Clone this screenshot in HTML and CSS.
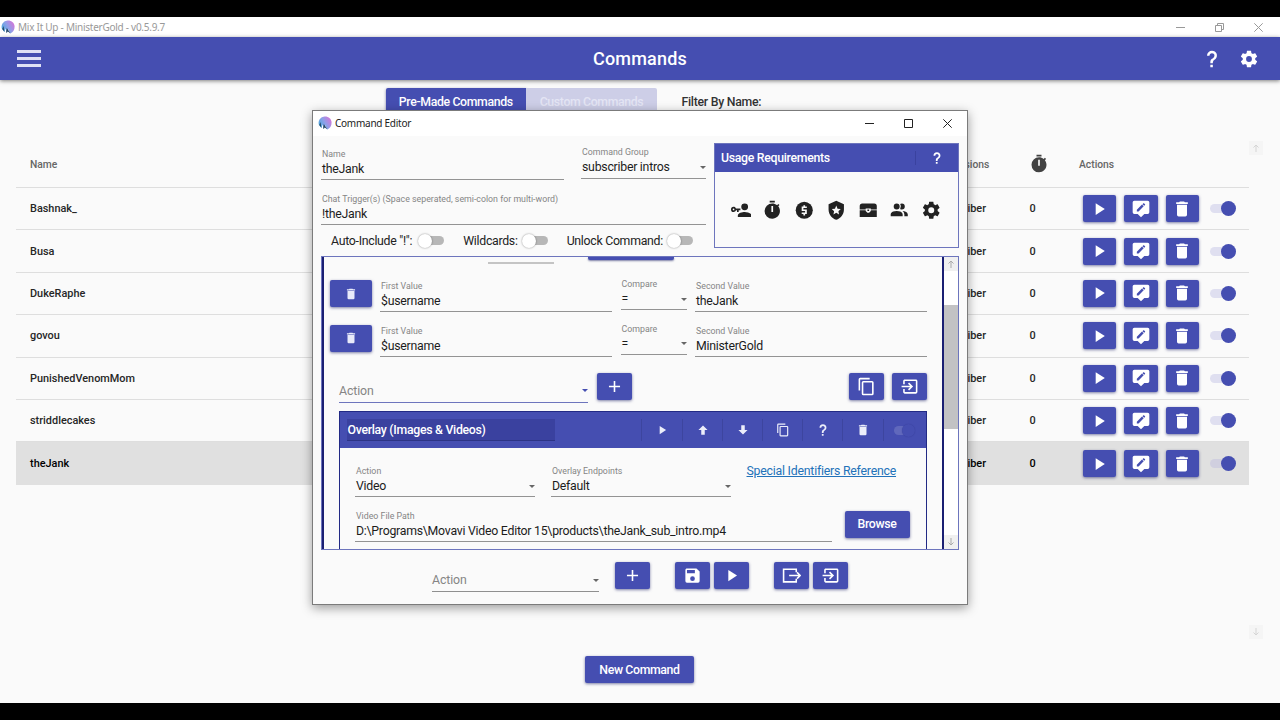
FILE: index.html
```html
<!DOCTYPE html>
<html lang="en">
<head>
<meta charset="utf-8">
<title>Mix It Up</title>
<link rel="stylesheet" href="styles.css">
</head>
<body>
<svg class="sprite" width="0" height="0">
  <linearGradient id="logo-fill" x1="0" y1="0.8" x2="1" y2="0.2"><stop offset="0" stop-color="#3fa9dc"/><stop offset=".5" stop-color="#8f9fe8"/><stop offset="1" stop-color="#d873d8"/></linearGradient>
  <symbol id="logo" viewBox="0 0 14 14"><path fill="url(#logo-fill)" d="M1 9A6 6.300 0 0 1 6.500 .5C10.500 .3 13.600 3 13.600 6.500C13.600 10 12 12.500 9 13.500L7 9L6 13L4.500 8.500L3.500 12Z"/><path fill="#26445f" d="M.5 11L2.500 6L3.400 12L1.500 9ZM5 13L5.800 8L9.500 13.600L6.800 11.500Z"/></symbol>
  <symbol id="help" viewBox="0 0 24 24"><path d="M10,19H13V22H10V19M12,2C17.35,2.22 19.68,7.62 16.5,11.67C15.67,12.67 14.33,13.33 13.67,14.17C13,15 13,16 13,17H10C10,15.33 10,13.92 10.67,12.92C11.33,11.92 12.67,11.33 13.5,10.67C15.92,8.43 15.32,5.26 12,5A3,3 0 0,0 9,8H6A6,6 0 0,1 12,2Z"/></symbol>
  <symbol id="cog" viewBox="0 0 24 24"><path d="M12,15.5A3.5,3.5 0 0,1 8.5,12A3.5,3.5 0 0,1 12,8.500A3.5,3.5 0 0,1 15.5,12A3.5,3.5 0 0,1 12,15.5M19.43,12.97C19.47,12.65 19.5,12.33 19.5,12C19.5,11.67 19.47,11.34 19.43,11L21.54,9.37C21.73,9.22 21.78,8.95 21.66,8.73L19.66,5.27C19.54,5.05 19.27,4.96 19.05,5.05L16.56,6.05C16.04,5.66 15.5,5.32 14.87,5.07L14.5,2.42C14.46,2.18 14.25,2 14,2H10C9.75,2 9.54,2.18 9.5,2.42L9.13,5.07C8.5,5.32 7.96,5.66 7.44,6.05L4.95,5.05C4.73,4.96 4.46,5.05 4.34,5.27L2.34,8.73C2.21,8.95 2.27,9.22 2.46,9.37L4.57,11C4.53,11.34 4.5,11.67 4.5,12C4.5,12.33 4.53,12.65 4.57,12.97L2.46,14.63C2.27,14.78 2.21,15.05 2.34,15.27L4.34,18.73C4.46,18.95 4.73,19.03 4.95,18.95L7.44,17.94C7.96,18.34 8.5,18.68 9.13,18.93L9.5,21.58C9.54,21.82 9.75,22 10,22H14C14.25,22 14.46,21.82 14.5,21.58L14.87,18.93C15.5,18.67 16.04,18.34 16.56,17.94L19.05,18.95C19.27,19.03 19.54,18.95 19.66,18.73L21.66,15.27C21.78,15.05 21.73,14.78 21.54,14.63L19.43,12.97Z"/></symbol>
  <symbol id="timer" viewBox="0 0 24 24"><path fill-rule="evenodd" d="M19.03,7.39L20.45,5.97C20,5.46 19.55,5 19.04,4.56L17.62,6C16.07,4.74 14.12,4 12,4A9,9 0 0,0 3,13A9,9 0 0,0 12,22C17,22 21,17.97 21,13C21,10.88 20.26,8.93 19.03,7.39ZM11,14V7H13V14ZM15,1H9V3H15Z"/></symbol>
  <symbol id="play" viewBox="0 0 24 24"><path d="M8,5.14V19.14L19,12.14L8,5.14Z"/></symbol>
  <symbol id="edit" viewBox="0 0 24 24"><path fill-rule="evenodd" d="M20,2H4A2,2 0 0,0 2,4V16A2,2 0 0,0 4,18H8L12,22L16,18H20A2,2 0 0,0 22,16V4A2,2 0 0,0 20,2ZM9.08,15H7V12.91L13.17,6.72L15.24,8.8ZM16.84,7.2L15.83,8.21L13.76,6.18L14.77,5.16C14.97,4.95 15.31,4.94 15.55,5.16L16.84,6.41C17.05,6.62 17.06,6.96 16.84,7.2Z"/></symbol>
  <symbol id="trash" viewBox="0 0 24 24"><path d="M19,4H15.5L14.5,3H9.5L8.5,4H5V6H19M6,19A2,2 0 0,0 8,21H16A2,2 0 0,0 18,19V7H6V19Z"/></symbol>
  <symbol id="copy" viewBox="0 0 24 24"><path d="M19,21H8V7H19M19,5H8A2,2 0 0,0 6,7V21A2,2 0 0,0 8,23H19A2,2 0 0,0 21,21V7A2,2 0 0,0 19,5M16,1H4A2,2 0 0,0 2,3V17H4V3H16V1Z"/></symbol>
  <symbol id="save" viewBox="0 0 24 24"><path d="M15,9H5V5H15M12,19A3,3 0 0,1 9,16A3,3 0 0,1 12,13A3,3 0 0,1 15,16A3,3 0 0,1 12,19M17,3H5C3.89,3 3,3.9 3,5V19A2,2 0 0,0 5,21H19A2,2 0 0,0 21,19V7L17,3Z"/></symbol>
  <symbol id="import" viewBox="0 0 24 24"><path d="M10.09 15.59L11.5 17l5-5-5-5-1.410 1.410L12.670 11H2v2h10.670zM20 3H6c-1.110 0-2 .9-2 2v4h2V5h14v14H6v-4H4v4c0 1.100.89 2 2 2h14c1.100 0 2-.9 2-2V5c0-1.100-.9-2-2-2z"/></symbol>
  <symbol id="export" viewBox="0 0 24 24"><path fill="none" stroke="currentColor" stroke-width="2" d="M18 8V4H2V20H18V16M9 12H23M19 8L23 12L19 16"/></symbol>
  <symbol id="up" viewBox="0 0 24 24"><path d="M15,20H9V12H4.16L12,4.16L19.84,12H15V20Z"/></symbol>
  <symbol id="down" viewBox="0 0 24 24"><path d="M9,4H15V12H19.84L12,19.84L4.16,12H9V4Z"/></symbol>
  <symbol id="plus" viewBox="0 0 24 24"><path d="M19,13H13V19H11V13H5V11H11V5H13V11H19V13Z"/></symbol>
  <symbol id="key" viewBox="0 0 24 24"><path d="M11,10V12H9V14H7V12H5.8C5.4,13.2 4.3,14 3,14A3,3 0 0,1 0,11A3,3 0 0,1 3,8C4.3,8 5.4,8.8 5.8,10H11M3,10A1,1 0 0,0 2,11A1,1 0 0,0 3,12A1,1 0 0,0 4,11A1,1 0 0,0 3,10M16,14C18.7,14 24,15.3 24,18V20H8V18C8,15.3 13.3,14 16,14M16,12A4,4 0 0,1 12,8A4,4 0 0,1 16,4A4,4 0 0,1 20,8A4,4 0 0,1 16,12Z"/></symbol>
  <symbol id="coin" viewBox="0 0 24 24"><circle cx="12" cy="12" r="10"/><path fill="none" stroke="#fafafa" stroke-width="2" d="M15 8.500H10V12H14V15.500H9M12 6V8M12 16V18"/></symbol>
  <symbol id="shield" viewBox="0 0 24 24"><path fill-rule="evenodd" d="M12,1L3,5V11C3,16.55 6.84,21.74 12,23C17.16,21.74 21,16.55 21,11V5ZM12,6.5L13.500,10.100L17.300,10.500L14.500,13.100L15.300,17L12,15L8.700,17L9.500,13.100L6.700,10.500L10.500,10.100Z"/></symbol>
  <symbol id="chest" viewBox="0 0 24 24"><path d="M5,4H19A3,3 0 0,1 22,7V11H15V10H9V11H2V7A3,3 0 0,1 5,4M11,11H13V13H11V11M2,12H9V13L11,15H13L15,13V12H22V20H2V12Z"/></symbol>
  <symbol id="users" viewBox="0 0 24 24"><path d="M16 17V19H2V17S2 13 9 13 16 17 16 17M12.5 7.5A3.5 3.5 0 1 0 9 11A3.5 3.5 0 0 0 12.5 7.5M15.94 13A5.32 5.32 0 0 1 18 17V19H22V17S22 13.37 15.94 13M15 4A3.39 3.39 0 0 0 13.07 4.59A5 5 0 0 1 13.07 10.41A3.39 3.39 0 0 0 15 11A3.5 3.5 0 0 0 15 4Z"/></symbol>
  <symbol id="min" viewBox="0 0 9 9"><path class="thin" d="M0 4.500H9"/></symbol>
  <symbol id="max" viewBox="0 0 9 9"><path class="thin" d="M.5 .5H8.500V8.500H.5Z"/></symbol>
  <symbol id="restore" viewBox="0 0 9 9"><path class="thin" d="M.5 2.500H6.500V8.500H.5ZM2.500 2.500V.5H8.500V6.500H6.500"/></symbol>
  <symbol id="close" viewBox="0 0 9 9"><path class="thin" d="M.3 .3L8.700 8.700M8.700 .3L.3 8.700"/></symbol>
  <symbol id="arrow" viewBox="0 0 8 8"><path class="thin" d="M4 8V1M1.500 3.500L4 1L6.500 3.500"/></symbol>
</svg>

<main class="window">
  <div class="titlebar">
    <svg class="logo"><use href="#logo"/></svg><span class="app-name">Mix It Up - MinisterGold - v0.5.9.7</span>
    <div class="controls"><svg><use href="#min"/></svg><svg><use href="#restore"/></svg><svg><use href="#close"/></svg></div>
  </div>
  <header class="appbar">
    <div class="menu"><i></i><i></i><i></i></div>
    <h1>Commands</h1>
    <div class="appbar-tools"><svg><use href="#help"/></svg><svg><use href="#cog"/></svg></div>
  </header>
  <div class="tabs"><button class="btn tab">Pre-Made Commands</button><button class="btn tab tab-off">Custom Commands</button><span class="filter">Filter By Name:</span></div>
  <section class="list">
    <div class="table">
      <div class="row head"><span>Name</span><span>Permissions</span><svg class="timer"><use href="#timer"/></svg><span>Actions</span></div>
      <div class="row"><b>Bashnak_</b><b>Subscriber</b><b>0</b><div class="actions"><button class="btn"><svg><use href="#play"/></svg></button><button class="btn"><svg><use href="#edit"/></svg></button><button class="btn"><svg><use href="#trash"/></svg></button><span class="switch on"></span></div></div>
      <div class="row"><b>Busa</b><b>Subscriber</b><b>0</b><div class="actions"><button class="btn"><svg><use href="#play"/></svg></button><button class="btn"><svg><use href="#edit"/></svg></button><button class="btn"><svg><use href="#trash"/></svg></button><span class="switch on"></span></div></div>
      <div class="row"><b>DukeRaphe</b><b>Subscriber</b><b>0</b><div class="actions"><button class="btn"><svg><use href="#play"/></svg></button><button class="btn"><svg><use href="#edit"/></svg></button><button class="btn"><svg><use href="#trash"/></svg></button><span class="switch on"></span></div></div>
      <div class="row"><b>govou</b><b>Subscriber</b><b>0</b><div class="actions"><button class="btn"><svg><use href="#play"/></svg></button><button class="btn"><svg><use href="#edit"/></svg></button><button class="btn"><svg><use href="#trash"/></svg></button><span class="switch on"></span></div></div>
      <div class="row"><b>PunishedVenomMom</b><b>Subscriber</b><b>0</b><div class="actions"><button class="btn"><svg><use href="#play"/></svg></button><button class="btn"><svg><use href="#edit"/></svg></button><button class="btn"><svg><use href="#trash"/></svg></button><span class="switch on"></span></div></div>
      <div class="row"><b>striddlecakes</b><b>Subscriber</b><b>0</b><div class="actions"><button class="btn"><svg><use href="#play"/></svg></button><button class="btn"><svg><use href="#edit"/></svg></button><button class="btn"><svg><use href="#trash"/></svg></button><span class="switch on"></span></div></div>
      <div class="row selected"><b>theJank</b><b>Subscriber</b><b>0</b><div class="actions"><button class="btn"><svg><use href="#play"/></svg></button><button class="btn"><svg><use href="#edit"/></svg></button><button class="btn"><svg><use href="#trash"/></svg></button><span class="switch on"></span></div></div>
    </div>
    <div class="rail faint"><span class="arrow"><svg><use href="#arrow"/></svg></span><span class="arrow flip"><svg><use href="#arrow"/></svg></span></div>
  </section>
  <footer class="footer"><button class="btn new">New Command</button></footer>
</main>

<div class="dialog">
  <div class="titlebar dialog-title">
    <svg class="logo"><use href="#logo"/></svg><span>Command Editor</span>
    <div class="controls"><svg><use href="#min"/></svg><svg><use href="#max"/></svg><svg><use href="#close"/></svg></div>
  </div>
  <div class="top">
    <div class="details">
      <div class="pair">
        <div class="field name-field"><label>Name</label><div class="value">theJank</div></div>
        <div class="field select group-field"><label>Command Group</label><div class="value">subscriber intros</div></div>
      </div>
      <div class="field trigger"><label>Chat Trigger(s) (Space seperated, semi-colon for multi-word)</label><div class="value">!theJank</div></div>
      <div class="toggles"><span>Auto-Include "!":</span><span class="switch"></span><span class="next">Wildcards:</span><span class="switch"></span><span class="next">Unlock Command:</span><span class="switch"></span></div>
    </div>
    <div class="usage">
      <div class="usage-head"><span>Usage Requirements</span><div class="usage-help"><svg><use href="#help"/></svg></div></div>
      <div class="usage-icons"><svg><use href="#key"/></svg><svg><use href="#timer"/></svg><svg><use href="#coin"/></svg><svg><use href="#shield"/></svg><svg><use href="#chest"/></svg><svg><use href="#users"/></svg><svg><use href="#cog"/></svg></div>
    </div>
  </div>
  <div class="scroller">
    <div class="conditional">
      <div class="clipped"><i class="clip-line"></i><i class="clip-btn"></i></div>
      <div class="cond">
        <button class="btn"><svg><use href="#trash"/></svg></button>
        <div class="field"><label>First Value</label><div class="value">$username</div></div>
        <div class="field select"><label>Compare</label><div class="value">=</div></div>
        <div class="field"><label>Second Value</label><div class="value">theJank</div></div>
      </div>
      <div class="cond">
        <button class="btn"><svg><use href="#trash"/></svg></button>
        <div class="field"><label>First Value</label><div class="value">$username</div></div>
        <div class="field select"><label>Compare</label><div class="value">=</div></div>
        <div class="field"><label>Second Value</label><div class="value">MinisterGold</div></div>
      </div>
      <div class="add-row">
        <div class="picker blue">Action</div>
        <button class="btn sq"><svg><use href="#plus"/></svg></button>
        <button class="btn sq push"><svg><use href="#copy"/></svg></button>
        <button class="btn sq"><svg><use href="#import"/></svg></button>
      </div>
      <div class="card">
        <div class="card-head">
          <div class="card-title">Overlay (Images &amp; Videos)</div>
          <div class="card-tools"><span><svg><use href="#play"/></svg></span><span><svg><use href="#up"/></svg></span><span><svg><use href="#down"/></svg></span><span><svg><use href="#copy"/></svg></span><span><svg><use href="#help"/></svg></span><span><svg><use href="#trash"/></svg></span><span><i class="switch on dim"></i></span></div>
        </div>
        <div class="card-body">
          <div class="card-row">
            <div class="field select"><label>Action</label><div class="value">Video</div></div>
            <div class="field select"><label>Overlay Endpoints</label><div class="value">Default</div></div>
            <a class="ref">Special Identifiers Reference</a>
          </div>
          <div class="card-row path">
            <div class="field"><label>Video File Path</label><div class="value">D:\Programs\Movavi Video Editor 15\products\theJank_sub_intro.mp4</div></div>
            <button class="btn browse">Browse</button>
          </div>
        </div>
      </div>
    </div>
    <div class="rail"><span class="arrow"><svg><use href="#arrow"/></svg></span><span class="thumb"></span><span class="arrow flip"><svg><use href="#arrow"/></svg></span></div>
  </div>
  <div class="bottom">
    <div class="picker">Action</div>
    <button class="btn sq add"><svg><use href="#plus"/></svg></button>
    <button class="btn sq"><svg><use href="#save"/></svg></button>
    <button class="btn sq run"><svg><use href="#play"/></svg></button>
    <button class="btn sq out"><svg><use href="#export"/></svg></button>
    <button class="btn sq in"><svg><use href="#import"/></svg></button>
  </div>
</div>
</body>
</html>
```
FILE: styles.css
```css
* { box-sizing: border-box; }
body { margin: 0; width: 1280px; height: 720px; padding: 17px 0; background: #000; overflow: hidden; font-family: Roboto, "Open Sans", sans-serif; color: #222; }
svg { fill: currentColor; display: block; flex: none; }
.sprite { position: absolute; }
.thin { fill: none; stroke: currentColor; stroke-width: 1; }
.window { height: 686px; background: #fafafa; display: flex; flex-direction: column; }

.titlebar { height: 20px; flex: none; background: #fff; display: flex; align-items: center; padding-left: 1px; font: 10px/20px "Noto Sans", sans-serif; color: #999; letter-spacing: -.26px; }
.logo { width: 14px; height: 14px; margin-right: 3px; }
.controls { margin-left: auto; display: flex; gap: 30px; padding-right: 17px; color: #999; }
.controls svg { width: 9px; height: 9px; }

.appbar { height: 43px; flex: none; background: #454eb1; color: #fff; display: grid; grid-template-columns: 1fr auto 1fr; align-items: center; box-shadow: 0 1px 4px rgba(0,0,0,.5); }
.appbar h1 { margin: 0; font-size: 18px; font-weight: 500; letter-spacing: .2px; }
.menu { display: flex; flex-direction: column; gap: 4px; width: 24px; margin-left: 17px; }
.menu i { height: 3px; background: #dfe1f5; }
.appbar-tools { display: flex; justify-content: flex-end; gap: 17px; padding-right: 21px; }
.appbar-tools svg { width: 20px; height: 20px; }

.btn { font: 500 12.300px Roboto, sans-serif; letter-spacing: -.36px; color: #fff; background: #454eb1; border: 0; border-radius: 2px; padding: 0; height: 27px; display: flex; align-items: center; justify-content: center; flex: none; box-shadow: 0 1px 3px rgba(40,45,110,.6); }
.tabs { display: flex; padding: 8px 0 0 385.500px; height: 59px; flex: none; }
.tab { width: 140.500px; padding-top: 1px; border-radius: 2px 0 0 2px; }
.tab-off { width: 131px; background: #cdcee7; color: #e4e5f4; box-shadow: none; border-radius: 0 2px 2px 0; }
.filter { margin-left: 24.500px; font-size: 12.300px; letter-spacing: -.27px; font-weight: 500; line-height: 28px; color: #333; }

.list { display: flex; justify-content: space-between; height: 500px; flex: none; padding: 0 17px 0 16px; }
.table { width: 1233px; }
.row { height: 42.400px; display: grid; grid-template-columns: 902px 97.500px 49.500px 1fr; padding-left: 14px; align-items: center; border-bottom: 1px solid #dedede; font-size: 10.900px; color: #262626; }
.row b { font-weight: 500; }
.row b:nth-child(2) { margin-left: 1.500px; }
.head { height: 49px; color: #666; font-weight: 500; font-size: 10.300px; padding-top: 2px; }
.timer { width: 20px; height: 20px; margin: 0 0 1px -1px; color: #424242; }
.selected { background: #e0e0e0; color: #000; border: 0; }
.actions { display: flex; align-items: center; padding-left: 3.500px; gap: 8px; }
.actions .btn { width: 33.500px; height: 27px; }
.actions svg { width: 20px; height: 20px; }
.actions .switch { margin-left: 3px; }
.rail { display: flex; flex-direction: column; }
.rail.faint { width: 14px; margin-top: 2px; justify-content: space-between; opacity: .45; }
.arrow { width: 14px; height: 14px; background: #f0f0f0; color: #aaa; display: flex; align-items: center; justify-content: center; }
.arrow svg { width: 8px; height: 8px; }
.flip { transform: rotate(180deg); }
.footer { padding: 17px 0 0 585px; }
.new { width: 109px; }

.switch { width: 26px; height: 15px; display: grid; align-items: center; flex: none; }
.switch::before, .switch::after { content: ""; grid-area: 1 / 1; }
.switch::before { width: 20px; height: 9px; border-radius: 5px; background: #b7b7b7; justify-self: end; }
.switch::after { width: 14px; height: 14px; border-radius: 50%; background: #fff; box-shadow: 0 0 2px rgba(0,0,0,.45); justify-self: start; }
.switch.on::before { background: #dfdff0; justify-self: start; }
.switch.on::after { width: 15px; height: 15px; background: #454eb1; box-shadow: none; justify-self: end; }
.selected .switch.on::before { background: #d0cfdf; }
.switch.dim { width: 21px; margin-right: 2px; }
.switch.dim::before { width: 16px; background: #6068bc; }
.switch.dim::after { width: 13px; height: 13px; box-shadow: 0 0 1px #343c94; }

.dialog { position: absolute; left: 312px; top: 110px; width: 656px; height: 495px; background: #fafafa; border: 1px solid #7b7b7b; box-shadow: 0 3px 10px rgba(0,0,0,.38); display: flex; flex-direction: column; }
.dialog-title { height: 25px; padding: 0 0 1px 5px; color: #222; line-height: 23px; }
.dialog-title .controls { gap: 30px; padding-right: 15px; color: #222; }
.top { display: flex; height: 120px; flex: none; padding: 8px 8px 0; justify-content: space-between; }
.details { width: 385px; padding-top: 2px; }
.pair { display: flex; gap: 17px; height: 47px; }
.field { display: flex; flex-direction: column; height: 32px; border-bottom: 1px solid #939393; padding-left: 1px; }
.field label { font-size: 8.800px; line-height: 12px; color: #858585; white-space: nowrap; }
.field .value { font-size: 12.300px; letter-spacing: -.25px; line-height: 18px; color: #1c1c1c; white-space: nowrap; }
.select .value, .picker { display: flex; align-items: center; justify-content: space-between; }
.select .value::after, .picker::after { content: ""; border: 3.500px solid transparent; border-top-color: #666; border-bottom: 0; }
.name-field { width: 243px; margin-top: 2px; }
.group-field { width: 125px; height: 33px; }
.toggles { display: flex; align-items: center; font-size: 12.300px; letter-spacing: -.28px; height: 31px; padding-left: 10px; }
.toggles .switch { margin-left: 6px; }
.toggles .next { margin-left: 19px; }
.toggles .next + .switch { margin-left: 4px; }
.usage { width: 245px; height: 105px; margin-top: -1px; border: 1px solid #6d75bd; display: flex; flex-direction: column; }
.usage-head { background: #454eb1; height: 28px; color: #fff; font: 500 12.300px/28px Roboto, sans-serif; letter-spacing: -.3px; display: flex; justify-content: space-between; padding-left: 6px; }
.usage-help { width: 43px; padding-right: 1px; display: flex; align-items: center; justify-content: center; border-left: 1px solid #3a429f; margin: 7px 0; }
.usage-help svg { width: 14px; height: 14px; }
.usage-icons { flex: 1; display: flex; align-items: center; justify-content: space-between; padding: 2px 16.500px 0 15.500px; }
.usage-icons svg { width: 20.500px; height: 20.500px; }

.scroller { margin: 0 8px; height: 294px; border: 1px solid #6d75bd; display: flex; overflow: hidden; flex: none; }
.conditional { width: 622px; height: 292px; border: solid #1a1f73; border-width: 0 2px; padding: 0 15px 0 6px; overflow: hidden; }
.scroller .rail { width: 14px; background: #fff; }
.thumb { height: 124px; margin: 34px 0 auto; background: #c2c2c4; }
.clipped { height: 23px; display: flex; padding-left: 158px; gap: 34px; }
.clip-line { width: 66px; height: 7px; border-bottom: 2px solid #c4c4c4; }
.clip-btn { width: 86px; height: 3px; background: #454eb1; border-radius: 0 0 2px 2px; box-shadow: 0 1px 2px rgba(40,45,110,.6); }
.cond { display: grid; grid-template-columns: 42px 232px 66px 232px; column-gap: 8.500px; height: 44.700px; align-items: start; margin-left: -.5px; }
.cond .select { margin-top: -2px; height: 32px; }
.cond .btn svg { width: 14px; height: 14px; color: #e8eafa; }
.add-row { display: flex; padding-left: 9px; gap: 8.500px; height: 42px; padding-top: 3.500px; }
.picker { width: 249px; height: 30px; padding-top: 7px; border-bottom: 1px solid #8f8f8f; font-size: 12.300px; letter-spacing: -.1px; color: #858585; }
.blue { border-color: #6d75bd; }
.blue::after { border-top-color: #454eb1; }
.sq { width: 35px; }
.sq svg { width: 19px; height: 19px; }
.push { margin-left: auto; }
.card { width: 588px; margin-left: 8.500px; height: 200px; border: 1px solid #222a85; }
.card-head { height: 36px; background: #454eb1; display: flex; justify-content: space-between; align-items: center; padding-left: 7px; }
.card-title { width: 208px; height: 22px; background: #3a419f; border-bottom: 1px solid #2c3385; color: #fff; font: 500 12.300px/22px Roboto, sans-serif; letter-spacing: -.29px; padding-left: 1px; }
.card-tools { display: flex; color: #eceefa; }
.card-tools span { width: 40.200px; height: 22px; border-left: 1px solid #3d459f; display: flex; align-items: center; justify-content: center; padding-left: 1px; }
.card-tools span:last-child { width: 43px; }
.card-tools svg { width: 14px; height: 14px; }
.card-body { padding: 17px 15px 0 15.500px; }
.card-row { display: flex; gap: 16.500px; height: 45px; }
.card-row .select { width: 179.500px; }
.ref { font-size: 12.300px; letter-spacing: -.22px; color: #2272b9; text-decoration: underline; line-height: 13px; margin-left: -.5px; white-space: nowrap; }
.path { gap: 12.500px; }
.path .field { width: 477px; }
.browse { width: 65px; margin-top: .5px; }
.bottom { display: flex; padding: 12px 0 0 119px; }
.bottom .picker { width: 167px; }
.bottom .sq { margin-left: 25px; }
.bottom .add { margin-left: 16px; }
.bottom .run, .bottom .in { margin-left: 4px; }
```
